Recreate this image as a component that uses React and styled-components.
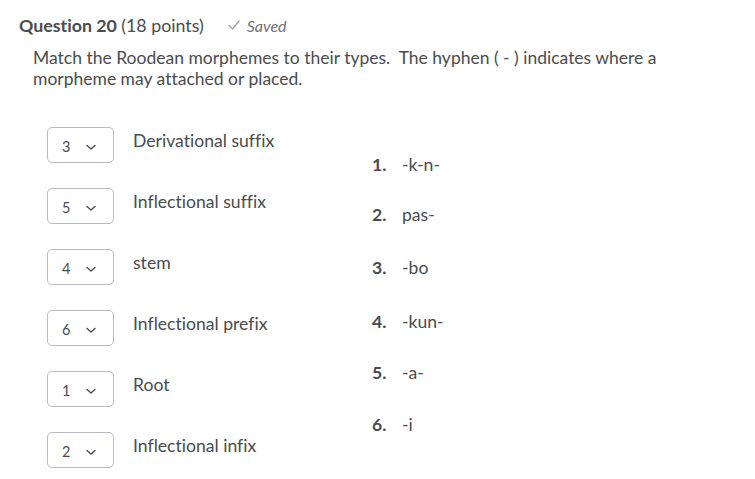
import React from 'react'
import styled, { createGlobalStyle } from 'styled-components'

const GlobalStyle = createGlobalStyle`
    body {
        margin: 0;
        background: #fff;
        font-family: Lato, "Open Sans", sans-serif;
        color: #494c4e;
        font-variant-ligatures: none;
    }
`;

const Page = styled.div`
    padding: 13px 19px 0 19px;
`;

const Header = styled.div`
    display: flex;
    align-items: baseline;

    h2 {
        margin: 0;
        font-size: 17.8px;
        font-weight: 700;
        line-height: 24px;
    }

    .points {
        font-weight: 400;
    }
`;

const Saved = styled.span`
    display: inline-flex;
    align-items: center;
    gap: 6px;
    margin-left: 23px;
    font-size: 16px;
    font-style: italic;
    color: #6e7376;

    svg {
        width: 14px;
        height: 14px;
    }
`;

const Prompt = styled.p`
    margin: 10px 0 0 14px;
    font-size: 17.5px;
    line-height: 21px;
    max-width: 660px;
`;

const Matching = styled.div`
    display: flex;
    align-items: flex-start;
    margin: 38px 0 0 28px;
`;

const ChoiceList = styled.div`
    display: flex;
    flex-direction: column;
    gap: 25px;
    width: 325px;
`;

const ChoiceRow = styled.div`
    display: flex;
    align-items: flex-start;
    gap: 19px;
`;

const Select = styled.div`
    box-sizing: border-box;
    width: 67px;
    height: 36px;
    border: 1px solid #b9bdc1;
    border-radius: 5px;
    display: flex;
    align-items: center;
    padding: 3px 0 0 14px;
    gap: 15px;
    font-size: 14.5px;
    color: #494c4e;

    svg {
        width: 12px;
        height: 12px;
    }
`;

const Label = styled.div`
    font-size: 17.6px;
    line-height: 22px;
    padding-top: 3px;
`;

const AnswerList = styled.ol`
    list-style: none;
    margin: 27px 0 0 0;
    padding: 0;
`;

const Answer = styled.li`
    height: ${props => props.h}px;
    display: flex;
    align-items: flex-start;
    font-size: 17.6px;
    line-height: 22px;

    .num {
        width: 30px;
        font-weight: 700;
    }
`;

const Chevron = () => (
    <svg viewBox="0 0 12 12" fill="none" stroke="#494c4e" strokeWidth="1.4" strokeLinecap="round" strokeLinejoin="round">
        <path d="M2 4.5 L6 8 L10 4.5" />
    </svg>
)

const choices = [
    { value: 3, label: "Derivational suffix" },
    { value: 5, label: "Inflectional suffix" },
    { value: 4, label: "stem" },
    { value: 6, label: "Inflectional prefix" },
    { value: 1, label: "Root" },
    { value: 2, label: "Inflectional infix" },
];

const answers = [
    { text: "-k-n-", h: 50 },
    { text: "pas-", h: 53 },
    { text: "-bo", h: 54 },
    { text: "-kun-", h: 51 },
    { text: "-a-", h: 52 },
    { text: "-i", h: 52 },
];

export default function App() {
    return (
        <Page>
            <GlobalStyle />
            <Header>
                <h2>Question 20 <span className='points'>(18 points)</span></h2>
                <Saved>
                    <svg viewBox="0 0 14 14" fill="none" stroke="#a4aab0" strokeWidth="1.6" strokeLinecap="round" strokeLinejoin="round">
                        <path d="M2 7.5 L5.5 11 L12 3" />
                    </svg>
                    Saved
                </Saved>
            </Header>
            <Prompt>
                Match the Roodean morphemes to their types.&nbsp; The hyphen ( - ) indicates where a morpheme may attached or placed.
            </Prompt>
            <Matching>
                <ChoiceList>
                    {choices.map((choice, index) => (
                        <ChoiceRow key={"choice-" + index}>
                            <Select>
                                <span>{choice.value}</span>
                                <Chevron />
                            </Select>
                            <Label>{choice.label}</Label>
                        </ChoiceRow>
                    ))}
                </ChoiceList>
                <AnswerList>
                    {answers.map((answer, index) => (
                        <Answer key={"answer-" + index} h={answer.h}>
                            <span className='num'>{index + 1}.</span>
                            <span>{answer.text}</span>
                        </Answer>
                    ))}
                </AnswerList>
            </Matching>
        </Page>
    )
}
